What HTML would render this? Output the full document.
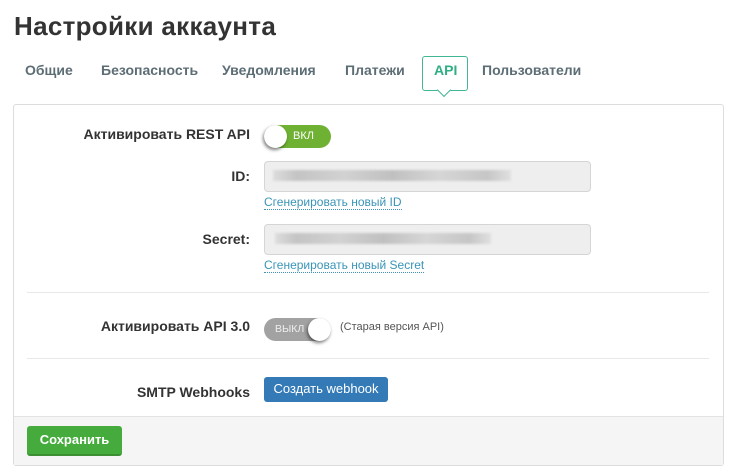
<!DOCTYPE html>
<html><head><meta charset="utf-8"><style>
*{box-sizing:border-box;margin:0;padding:0}
body{width:731px;height:472px;background:#fff;font-family:"Liberation Sans","DejaVu Sans",sans-serif;color:#333;position:relative;overflow:hidden}
.a{position:absolute;white-space:nowrap}
h1{position:absolute;left:14px;top:11px;font-size:26px;font-weight:bold;color:#333;letter-spacing:0.3px}
.tab{position:absolute;top:62px;font-size:14px;font-weight:bold;color:#5d6d75}
.apitab{position:absolute;left:422px;top:56px;width:46px;height:35px;border:1px solid #3fb694;border-radius:3px;background:#fff}
.arrow{position:absolute;left:439px;top:85px;width:10px;height:10px;background:#fff;border-right:1px solid #3fb694;border-bottom:1px solid #3fb694;transform:rotate(45deg)}
.panel{position:absolute;left:13px;top:104px;width:711px;height:362px;border:1px solid #ddd;border-radius:3px;background:#fff}
.footer{position:absolute;left:14px;top:416px;width:709px;height:49px;background:#f5f5f5;border-top:1px solid #e3e3e3}
.lbl{position:absolute;right:481px;font-size:14px;font-weight:bold;color:#333;text-align:right}
.inp{position:absolute;left:264px;width:327px;height:31px;border:1px solid #d5d5d5;border-radius:4px;background:#eee}
.blur{position:absolute;top:8px;height:11px;background:linear-gradient(90deg,#ddd,#c4c4c4 10%,#d2d2d2 30%,#c0c0c0 50%,#d6d6d6 70%,#c6c6c6 90%,#e0e0e0);filter:blur(1px)}
.link{position:absolute;left:264px;font-size:12px;color:#3a94b8;border-bottom:1px dotted #3a94b8;line-height:14px}
.sep{position:absolute;left:27px;width:682px;height:1px;background:#e8e8e8}
</style></head><body>
<h1>Настройки аккаунта</h1>
<div class="tab" style="left:25px">Общие</div>
<div class="tab" style="left:101px">Безопасность</div>
<div class="tab" style="left:222px">Уведомления</div>
<div class="tab" style="left:345px">Платежи</div>
<div class="apitab"></div><div class="arrow"></div>
<div class="tab" style="left:434px;color:#2fae86">API</div>
<div class="tab" style="left:482px">Пользователи</div>

<div class="panel"></div>
<div class="footer"></div>

<div class="lbl" style="top:126px">Активировать REST API</div>
<div class="a" style="left:264px;top:125px;width:67px;height:23px;border-radius:12px;background:#6fb133"></div>
<div class="a" style="left:264px;top:125px;width:23px;height:23px;border-radius:50%;background:#fff;box-shadow:-1px 2px 3px rgba(0,0,0,.5)"></div>
<div class="a" style="left:293px;top:130px;font-size:11px;color:#fff">ВКЛ</div>

<div class="lbl" style="top:168px">ID:</div>
<div class="inp" style="top:161px"><div class="blur" style="left:8px;width:238px"></div></div>
<div class="link" style="top:195px">Сгенерировать новый ID</div>

<div class="lbl" style="top:231px">Secret:</div>
<div class="inp" style="top:224px"><div class="blur" style="left:10px;width:216px"></div></div>
<div class="link" style="top:258px">Сгенерировать новый Secret</div>

<div class="sep" style="top:292px"></div>

<div class="lbl" style="top:318px">Активировать API 3.0</div>
<div class="a" style="left:264px;top:318px;width:67px;height:23px;border-radius:12px;background:#a2a2a2"></div>
<div class="a" style="left:308px;top:318px;width:23px;height:23px;border-radius:50%;background:#fff;box-shadow:-1px 2px 3px rgba(0,0,0,.5)"></div>
<div class="a" style="left:275px;top:323px;font-size:10.5px;color:#eee">ВЫКЛ</div>
<div class="a" style="left:340px;top:321px;font-size:11px;color:#555">(Старая версия API)</div>

<div class="sep" style="top:358px"></div>

<div class="lbl" style="top:384px">SMTP Webhooks</div>
<div class="a" style="left:264px;top:377px;width:124px;height:25px;background:#337ab7;border-radius:3px;color:#fff;font-size:13px;text-align:center;line-height:23px">Создать webhook</div>

<div class="a" style="left:27px;top:426px;width:95px;height:30px;background:#46ab3d;border-radius:3px;border-bottom:2px solid #3a8f32;color:#fff;font-size:13px;font-weight:bold;text-align:center;line-height:28px">Сохранить</div>
</body></html>
